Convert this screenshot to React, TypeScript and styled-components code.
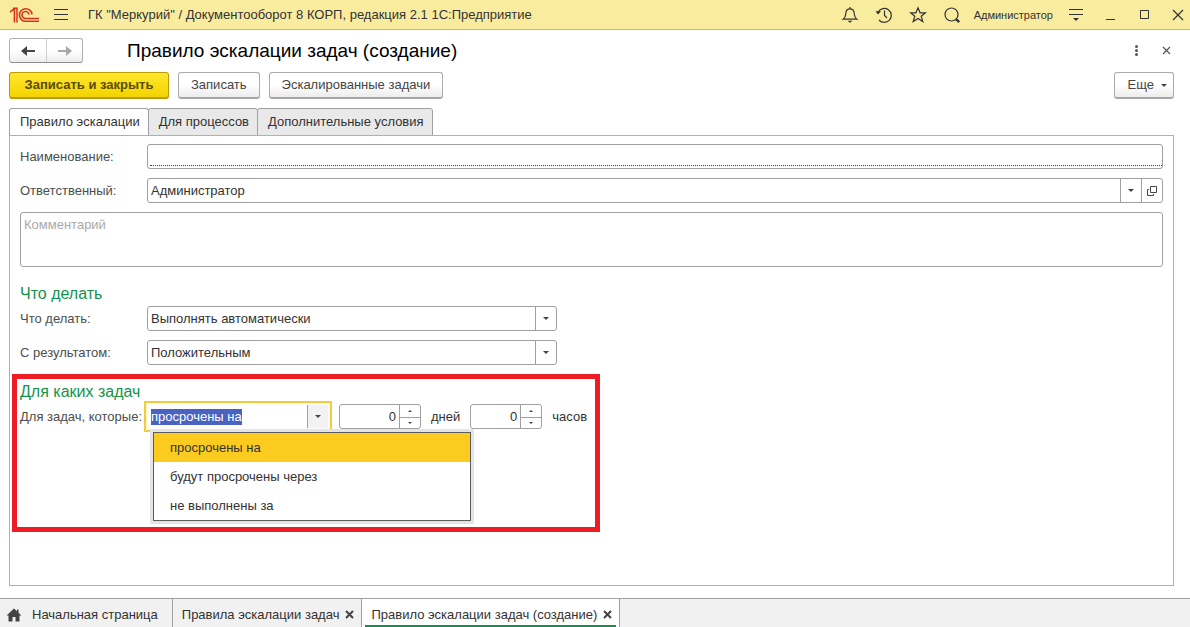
import React, { useEffect, useRef, useState } from "react";
import styled, { createGlobalStyle, css } from "styled-components";

const line = "#a0a0a0";
const ink = "#333333";
const labelInk = "#4d4d4d";
const green = "#14934a";
const gold = "#f1cd3c";

const GlobalStyle = createGlobalStyle`
  * { box-sizing: border-box; }
  body { margin: 0; background: #ffffff; }
  body, button, input, select, textarea {
    font-family: "Liberation Sans", Arial, sans-serif;
    font-size: 13px;
    line-height: 16px;
    color: ${ink};
  }
  button { padding: 0; border: 0; background: none; }
  svg { display: block; }
`;

const Page = styled.div`
  min-height: 100vh;
  display: flex;
  flex-direction: column;
`;

/* Title bar */
const TitleBar = styled.header`
  display: flex;
  align-items: center;
  gap: 10px;
  height: 30px;
  padding-left: 9px;
  background: #faec9f;
  border-bottom: 1px solid #c9bb6c;
`;

const AppTitle = styled.span`
  flex: 1;
  min-width: 0;
  padding-left: 5px;
  overflow: hidden;
  white-space: nowrap;
  text-overflow: ellipsis;
`;

const UserLink = styled.a`
  padding: 0 1px 0 0;
  font-size: 11px;
  color: ${ink};
  text-decoration: none;
`;

const IconButton = styled.button`
  display: grid;
  place-items: center;
  width: 24px;
  height: 24px;
`;

/* Form header */
const Main = styled.main`
  flex: 1;
  display: flex;
  flex-direction: column;
  padding: 8px 16px 12px 9px;
`;

const HeadRow = styled.div`
  display: flex;
  align-items: center;
  height: 25px;
`;

const History = styled.div`
  display: flex;
  height: 25px;
  border: 1px solid #b0b0b0;
  border-bottom-color: #8c8c8c;
  border-radius: 3px;
  background: linear-gradient(#ffffff 50%, #ededed);
`;

const HistoryButton = styled.button`
  display: grid;
  place-items: center;
  width: 36px;
  & + & {
    border-left: 1px solid #d0d0d0;
  }
`;

const Title = styled.h1`
  flex: 1;
  margin: 0;
  padding-left: 44px;
  font-size: 19px;
  line-height: 24px;
  font-weight: normal;
  color: #000000;
`;

const HeadTools = styled.div`
  display: flex;
  gap: 6px;
  margin-right: -4px;
`;

const Toolbar = styled.div`
  display: flex;
  gap: 9px;
  margin-top: 9px;
`;

const PushButton = styled.button<{ $primary?: boolean }>`
  height: 27px;
  padding: 0 12px;
  border: 1px solid #acacac;
  border-bottom: 2px solid #a6a6a6;
  border-radius: 3px;
  background: linear-gradient(#ffffff 50%, #ececec);
  color: #444444;
  ${(p) =>
    p.$primary &&
    css`
      min-width: 160px;
      border-color: #b89b00;
      background: linear-gradient(#ffe72e, #f3d300);
      color: #5a4c00;
      font-weight: bold;
    `}
`;

const MoreButton = styled(PushButton)`
  display: flex;
  align-items: center;
  gap: 7px;
  margin-left: auto;
  padding: 0 6px 0 13px;
`;

/* Tabs */
const Tabs = styled.div`
  display: flex;
  margin-top: 9px;
`;

const Tab = styled.button<{ $active?: boolean }>`
  height: 28px;
  margin-bottom: -1px;
  padding: 0 8px 0 10px;
  border: 1px solid ${line};
  border-radius: 3px 3px 0 0;
  background: #e9e9e9;
  white-space: nowrap;
  & + & {
    margin-left: -1px;
  }
  ${(p) =>
    p.$active &&
    css`
      border-bottom-color: #ffffff;
      background: #ffffff;
    `}
`;

const Panel = styled.section`
  flex: 1;
  padding: 8px 10px;
  border: 1px solid #b0b0b0;
`;

const Form = styled.div`
  display: flex;
  flex-direction: column;
  gap: 9px;
`;

const FieldRow = styled.div`
  display: flex;
  align-items: center;
  height: 25px;
`;

const Label = styled.label`
  flex: none;
  width: 127px;
  color: ${labelInk};
  white-space: nowrap;
`;

const Field = styled.div<{ $width?: number }>`
  position: relative;
  display: flex;
  height: 25px;
  border: 1px solid ${line};
  border-radius: 3px;
  background: #ffffff;
  overflow: hidden;
  ${(p) => (p.$width ? `flex: none; width: ${p.$width}px;` : "flex: 1;")}
`;

const TextInput = styled.input<{ $required?: boolean; $right?: boolean }>`
  flex: 1;
  min-width: 0;
  margin: 0;
  padding: 0 3px;
  border: 0;
  outline: 0;
  background: transparent;
  text-align: ${(p) => (p.$right ? "right" : "left")};
  ${(p) =>
    p.$required &&
    css`
      height: 21px;
      margin-left: 2px;
      border-bottom: 1px dotted #b01818;
    `}
  &::selection {
    background: #4a63c0;
    color: #ffffff;
  }
`;

const Select = styled.select`
  flex: 1;
  min-width: 0;
  padding: 0 3px;
  border: 0;
  outline: 0;
  appearance: none;
  background: transparent;
`;

const SideButton = styled.button<{ $shaded?: boolean }>`
  display: grid;
  place-items: center;
  flex: none;
  width: 21px;
  border-left: 1px solid ${line};
  background: ${(p) => (p.$shaded ? "#f2f2f2" : "transparent")};
`;

const SelectArrow = styled.span`
  display: grid;
  place-items: center;
  flex: none;
  width: 21px;
  border-left: 1px solid ${line};
  pointer-events: none;
`;

const Comment = styled.textarea`
  display: block;
  width: 100%;
  height: 55px;
  padding: 4px 3px;
  border: 1px solid ${line};
  border-radius: 3px;
  outline: 0;
  resize: none;
  &::placeholder {
    color: #a9a9a9;
  }
`;

const GroupTitle = styled.h2`
  margin: 0 0 2px;
  font-size: 16px;
  line-height: 20px;
  font-weight: normal;
  color: ${green};
`;

const Group = styled.section`
  margin-top: 17px;
`;

const Highlighted = styled.section`
  width: 588px;
  min-height: 158px;
  margin: 9px 0 0 -8px;
  padding: 3px;
  border: 5px solid #ee1c25;
`;

const Combo = styled.div`
  position: relative;
  flex: none;
  width: 182px;
  margin-right: 10px;
`;

const ComboField = styled.div`
  display: flex;
  height: 25px;
  border: 1px solid #ffffff;
  background: #ffffff;
  box-shadow: 0 0 0 1px #fdf6cf, 0 0 0 3px ${gold};
`;

const Menu = styled.ul`
  position: absolute;
  z-index: 1;
  top: 28px;
  left: 6px;
  width: 318px;
  margin: 0;
  padding: 0;
  border: 1px solid #5c5c5c;
  background: #ffffff;
  box-shadow: 0 0 0 3px #e4e4e4;
  list-style: none;
`;

const MenuItem = styled.li<{ $current?: boolean }>`
  padding: 7px 16px 6px;
  background: ${(p) => (p.$current ? "#fbcb20" : "#ffffff")};
`;

const Unit = styled.label`
  margin: 0 10px;
`;

const Steps = styled.div`
  display: grid;
  grid-template-rows: 1fr 1fr;
  flex: none;
  width: 21px;
  border-left: 1px solid ${line};
`;

const Step = styled.button`
  display: grid;
  place-items: center;
  & + & {
    border-top: 1px solid ${line};
  }
`;

/* Window tabs */
const WindowBar = styled.nav`
  display: flex;
  height: 29px;
  border-top: 1px solid ${line};
  background: #f1f1f1;
`;

const WindowTab = styled.div<{ $active?: boolean }>`
  display: flex;
  align-items: center;
  gap: 5px;
  padding: 3px 6px 0 9px;
  border-right: 1px solid ${line};
  white-space: nowrap;
  ${(p) =>
    p.$active &&
    css`
      position: relative;
      background: #ffffff;
      &::after {
        content: "";
        position: absolute;
        left: 3px;
        right: 3px;
        bottom: 0;
        height: 2px;
        background: #0f9150;
      }
    `}
`;

const WindowLink = styled.a`
  display: flex;
  align-items: center;
  gap: 10px;
  color: ${ink};
  text-decoration: none;
`;

const HomeTab = styled(WindowTab)`
  padding: 3px 14px 0 6px;
`;

const CloseButton = styled.button`
  display: grid;
  place-items: center;
  width: 11px;
  height: 16px;
`;

const Stroke = ({ size = 18, w = 1, color = ink, children }: { size?: number; w?: number; color?: string; children: React.ReactNode }) => (
  <svg width={size} height={size} viewBox={`0 0 ${size} ${size}`} fill="none" stroke={color} strokeWidth={w} aria-hidden="true">
    {children}
  </svg>
);

const Caret = ({ up, small }: { up?: boolean; small?: boolean }) => (
  <svg width={small ? 4 : 6} height={small ? 2 : 3} viewBox="0 0 6 3" preserveAspectRatio="none" fill="#444444" aria-hidden="true">
    <path d={up ? "M0 3h6L3 0z" : "M0 0h6L3 3z"} />
  </svg>
);

const Cross = ({ size, w, color }: { size: number; w: number; color: string }) => (
  <Stroke size={size} w={w} color={color}>
    <path d={`M1 1L${size - 1} ${size - 1}M${size - 1} 1L1 ${size - 1}`} />
  </Stroke>
);

const Logo = () => (
  <svg width="30" height="18" viewBox="0 0 30 18" fill="none" stroke="#d8321f" aria-label="1C" role="img">
    <path d="M1 6.2L4.2 3.6H5.4V16.5" strokeWidth="1.5" />
    <path d="M4 2.2H8V16.5" strokeWidth="1.5" />
    <path d="M23 8.3A6.3 6.3 0 1 0 16.8 15.3H30" strokeWidth="1.6" />
    <path d="M20 8.6A3.5 3.5 0 1 0 16.8 12.5H30" strokeWidth="1.6" />
  </svg>
);

const Spinner = ({ id, width, unit }: { id: string; width: number; unit: string }) => {
  const [value, setValue] = useState(0);
  return (
    <>
      <Field $width={width}>
        <TextInput
          id={id}
          $right
          inputMode="numeric"
          value={value}
          onChange={(e) => setValue(Number(e.target.value) || 0)}
        />
        <Steps>
          <Step type="button" aria-label="Увеличить" onClick={() => setValue(value + 1)}>
            <Caret up small />
          </Step>
          <Step type="button" aria-label="Уменьшить" onClick={() => setValue(Math.max(0, value - 1))}>
            <Caret small />
          </Step>
        </Steps>
      </Field>
      <Unit htmlFor={id}>{unit}</Unit>
    </>
  );
};

const SelectRow = ({ id, label, options }: { id: string; label: string; options: string[] }) => (
  <FieldRow>
    <Label htmlFor={id}>{label}</Label>
    <Field $width={410}>
      <Select id={id}>
        {options.map((o) => (
          <option key={o}>{o}</option>
        ))}
      </Select>
      <SelectArrow>
        <Caret />
      </SelectArrow>
    </Field>
  </FieldRow>
);

const conditions = ["просрочены на", "будут просрочены через", "не выполнены за"];

export default function App() {
  const [condition, setCondition] = useState(conditions[0]);
  const comboRef = useRef<HTMLInputElement>(null);

  useEffect(() => {
    comboRef.current?.focus();
    comboRef.current?.select();
  }, []);

  return (
    <Page>
      <GlobalStyle />
      <TitleBar>
        <Logo />
        <IconButton type="button" aria-label="Меню">
          <Stroke size={16}>
            <path d="M1 2.5h14M1 7.5h14M1 12.5h14" />
          </Stroke>
        </IconButton>
        <AppTitle>ГК "Меркурий" / Документооборот 8 КОРП, редакция 2.1 1С:Предприятие</AppTitle>
        <IconButton type="button" aria-label="Уведомления">
          <Stroke w={1.2}>
            <path d="M2.2 13.2c2.6-1.8 2.4-4 2.7-6.5C5.2 4 6.7 2.8 9 2.8s3.8 1.2 4.1 3.9c.3 2.5.1 4.7 2.7 6.5z" />
            <path d="M9 2.8V1" />
            <path d="M6.5 14.8h5L9 16.8z" fill={ink} stroke="none" />
          </Stroke>
        </IconButton>
        <IconButton type="button" aria-label="История">
          <Stroke w={1.2}>
            <path d="M3.2 6A7 7 0 1 1 4 14" />
            <path d="M9.5 4.5V9.5L12 12" />
            <path d="M0.5 5.2h5.500L3 8.5z" fill={ink} stroke="none" />
          </Stroke>
        </IconButton>
        <IconButton type="button" aria-label="Избранное">
          <Stroke w={1.2}>
            <path d="M9 1.8l2.1 5h5.3l-4.2 3.4 1.6 5.4L9 12.4l-4.8 3.2 1.6-5.4L1.6 6.8h5.3z" />
          </Stroke>
        </IconButton>
        <IconButton type="button" aria-label="Поиск">
          <Stroke w={1.2}>
            <circle cx="8.5" cy="8.5" r="6.5" />
            <path d="M12.8 12.8L16.2 16.2" strokeWidth="2.4" />
          </Stroke>
        </IconButton>
        <UserLink href="#user">Администратор</UserLink>
        <IconButton type="button" aria-label="Настройки">
          <Stroke size={16}>
            <path d="M1 2.5h14M1 7.5h14" />
            <path d="M5 11h6l-3 3z" fill={ink} stroke="none" />
          </Stroke>
        </IconButton>
        <IconButton type="button" aria-label="Свернуть">
          <Stroke size={16}>
            <path d="M4 12.5h9" />
          </Stroke>
        </IconButton>
        <IconButton type="button" aria-label="Развернуть">
          <Stroke size={16}>
            <path d="M4.5 3.5h8v8h-8z" />
          </Stroke>
        </IconButton>
        <IconButton type="button" aria-label="Закрыть приложение">
          <Cross size={12} w={1.2} color={ink} />
        </IconButton>
      </TitleBar>

      <Main>
        <HeadRow>
          <History>
            <HistoryButton type="button" aria-label="Назад">
              <Stroke size={14} w={2} color="#444444">
                <path d="M4 7h10" />
                <path d="M0 7l6-5v10z" fill="#444444" stroke="none" />
              </Stroke>
            </HistoryButton>
            <HistoryButton type="button" aria-label="Вперед">
              <Stroke size={14} w={2} color="#a8a8a8">
                <path d="M0 7h10" />
                <path d="M14 7L8 2v10z" fill="#a8a8a8" stroke="none" />
              </Stroke>
            </HistoryButton>
          </History>
          <Title>Правило эскалации задач (создание)</Title>
          <HeadTools>
            <IconButton type="button" aria-label="Действия">
              <svg width="3" height="11" viewBox="0 0 3 11" fill="#555555" aria-hidden="true">
                <circle cx="1.5" cy="1.5" r="1.5" />
                <circle cx="1.5" cy="5.5" r="1.5" />
                <circle cx="1.5" cy="9.5" r="1.5" />
              </svg>
            </IconButton>
            <IconButton type="button" aria-label="Закрыть">
              <Cross size={9} w={1.2} color="#555555" />
            </IconButton>
          </HeadTools>
        </HeadRow>

        <Toolbar>
          <PushButton type="button" $primary>
            Записать и закрыть
          </PushButton>
          <PushButton type="button">Записать</PushButton>
          <PushButton type="button">Эскалированные задачи</PushButton>
          <MoreButton type="button">
            Еще <Caret />
          </MoreButton>
        </Toolbar>

        <Tabs role="tablist">
          <Tab type="button" role="tab" aria-selected $active>
            Правило эскалации
          </Tab>
          <Tab type="button" role="tab">
            Для процессов
          </Tab>
          <Tab type="button" role="tab">
            Дополнительные условия
          </Tab>
        </Tabs>

        <Panel>
          <Form>
            <FieldRow>
              <Label htmlFor="name">Наименование:</Label>
              <Field>
                <TextInput id="name" $required />
              </Field>
            </FieldRow>
            <FieldRow>
              <Label htmlFor="owner">Ответственный:</Label>
              <Field>
                <TextInput id="owner" defaultValue="Администратор" />
                <SideButton type="button" aria-label="Выбрать">
                  <Caret />
                </SideButton>
                <SideButton type="button" aria-label="Открыть">
                  <Stroke size={10} color="#444444">
                    <path d="M3.5 0.5h6v6h-6z" />
                    <path d="M2 3.5H0.5v6h6V8" />
                  </Stroke>
                </SideButton>
              </Field>
            </FieldRow>
            <Comment placeholder="Комментарий" aria-label="Комментарий" />
          </Form>

          <Group>
            <GroupTitle>Что делать</GroupTitle>
            <Form>
              <SelectRow id="action" label="Что делать:" options={["Выполнять автоматически"]} />
              <SelectRow id="result" label="С результатом:" options={["Положительным"]} />
            </Form>
          </Group>

          <Highlighted>
            <GroupTitle>Для каких задач</GroupTitle>
            <FieldRow>
              <Label htmlFor="condition">Для задач, которые:</Label>
              <Combo>
                <ComboField>
                  <TextInput
                    id="condition"
                    ref={comboRef}
                    role="combobox"
                    aria-expanded
                    aria-controls="condition-list"
                    value={condition}
                    readOnly
                  />
                  <SideButton type="button" aria-label="Показать список" $shaded>
                    <Caret />
                  </SideButton>
                </ComboField>
                <Menu id="condition-list" role="listbox">
                  {conditions.map((c) => (
                    <MenuItem
                      key={c}
                      role="option"
                      aria-selected={c === condition}
                      $current={c === condition}
                      onClick={() => setCondition(c)}
                    >
                      {c}
                    </MenuItem>
                  ))}
                </Menu>
              </Combo>
              <Spinner id="days" width={82} unit="дней" />
              <Spinner id="hours" width={72} unit="часов" />
            </FieldRow>
          </Highlighted>
        </Panel>
      </Main>

      <WindowBar>
        <HomeTab>
          <WindowLink href="#home">
            <svg width="16" height="14" viewBox="0 0 16 14" fill="#444444" aria-hidden="true">
              <path d="M8 0.5L0.5 7.5H2.5V13.5H6.5V9H9.5V13.5H13.5V7.5H15.5L12.5 4.7V1.5H11V3.3z" />
            </svg>
            Начальная страница
          </WindowLink>
        </HomeTab>
        <WindowTab>
          <WindowLink href="#rules">Правила эскалации задач</WindowLink>
          <CloseButton type="button" aria-label="Закрыть вкладку">
            <Cross size={9} w={2} color="#444444" />
          </CloseButton>
        </WindowTab>
        <WindowTab $active>
          <WindowLink href="#rule">Правило эскалации задач (создание)</WindowLink>
          <CloseButton type="button" aria-label="Закрыть вкладку">
            <Cross size={9} w={2} color="#444444" />
          </CloseButton>
        </WindowTab>
      </WindowBar>
    </Page>
  );
}
